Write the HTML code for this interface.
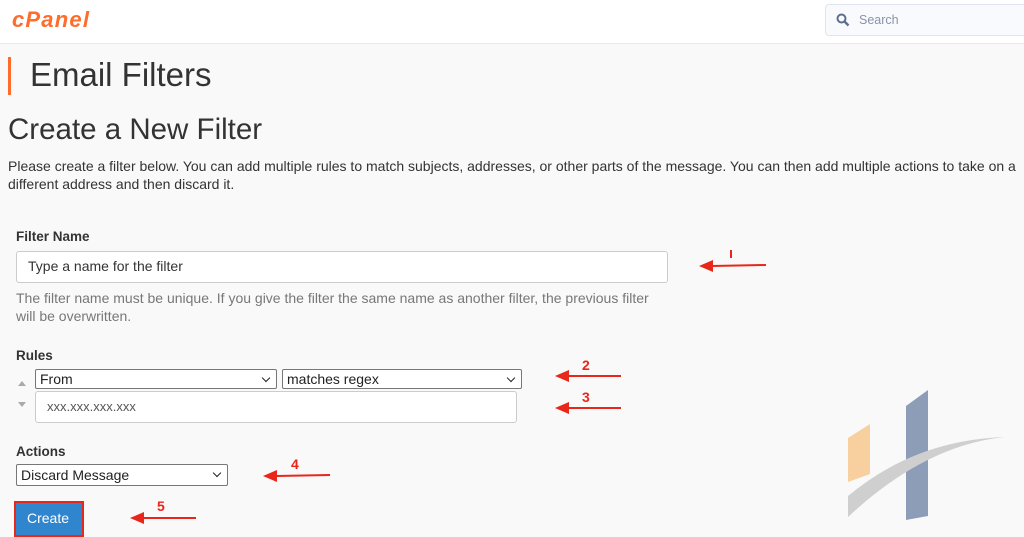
<!DOCTYPE html>
<html><head><meta charset="utf-8"><style>
*{box-sizing:border-box;margin:0;padding:0}
body{width:1024px;height:537px;overflow:hidden;background:#f9f9f9;font-family:"Liberation Sans",sans-serif;color:#333;position:relative}
.a{position:absolute}
.hdr{left:0;top:0;width:1024px;height:44px;background:#fff;border-bottom:1px solid #e6e9ef}
.sel{background:#fff;border:1px solid #777;border-radius:2px;font-size:14px;padding:1px 4px;color:#222}
.sel:after{content:"";position:absolute;right:7px;top:5px;width:5px;height:5px;border-right:1.5px solid #222;border-bottom:1.5px solid #222;transform:rotate(45deg)}
.inp{background:#fff;border:1px solid #ccc;border-radius:3px}
.lbl{font-weight:bold;font-size:13.5px;color:#333}
.num{color:#e8261a;font-weight:bold;font-size:14px}
</style></head><body>
<div class="a hdr"></div>
<div class="a" style="left:12px;top:7px;font-size:22px;font-weight:bold;font-style:italic;color:#ff6c2c;letter-spacing:1.2px">cPanel</div>
<div class="a" style="left:825px;top:4px;width:210px;height:32px;border:1px solid #dfe4ee;border-radius:4px;background:#f8fafd"></div>
<svg class="a" style="left:836px;top:13px" width="14" height="14" viewBox="0 0 14 14"><circle cx="5.5" cy="5.5" r="4" fill="none" stroke="#5b6f8f" stroke-width="2"/><path d="M8.5 8.5L12.5 12.5" stroke="#5b6f8f" stroke-width="2.4"/></svg>
<div class="a" style="left:859px;top:13px;font-size:12.5px;color:#8a94a6">Search</div>
<div class="a" style="left:8px;top:57px;width:3px;height:38px;background:#ff6c2c"></div>
<div class="a" style="left:30px;top:56px;font-size:33px;color:#333">Email Filters</div>
<div class="a" style="left:8px;top:113px;font-size:29.5px;color:#333">Create a New Filter</div>
<div class="a" style="left:8px;top:157px;font-size:14px;line-height:18px;white-space:nowrap;color:#333">Please create a filter below. You can add multiple rules to match subjects, addresses, or other parts of the message. You can then add multiple actions to take on a<br>different address and then discard it.</div>
<div class="a lbl" style="left:16px;top:229px">Filter Name</div>
<div class="a inp" style="left:16px;top:251px;width:652px;height:32px"></div>
<div class="a" style="left:28px;top:258px;font-size:14px;color:#333">Type a name for the filter</div>
<div class="a" style="left:16px;top:289px;font-size:14px;line-height:18px;color:#777;white-space:nowrap">The filter name must be unique. If you give the filter the same name as another filter, the previous filter<br>will be overwritten.</div>
<div class="a lbl" style="left:16px;top:348px">Rules</div>
<div class="a" style="left:18px;top:381px;width:0;height:0;border-left:4px solid transparent;border-right:4px solid transparent;border-bottom:5px solid #aaa"></div>
<div class="a" style="left:18px;top:402px;width:0;height:0;border-left:4px solid transparent;border-right:4px solid transparent;border-top:5px solid #aaa"></div>
<div class="a sel" style="left:35px;top:369px;width:242px;height:20px">From</div>
<div class="a sel" style="left:282px;top:369px;width:240px;height:20px">matches regex</div>
<div class="a inp" style="left:35px;top:391px;width:482px;height:32px"></div>
<div class="a" style="left:47px;top:399px;font-size:13px;color:#555">xxx.xxx.xxx.xxx</div>
<div class="a lbl" style="left:16px;top:444px">Actions</div>
<div class="a sel" style="left:16px;top:464px;width:212px;height:22px;padding-top:2px">Discard Message</div>
<div class="a" style="left:14px;top:501px;width:70px;height:36px;border:2px solid #e8261a;background:#2f86cf"></div>
<div class="a" style="left:27px;top:510px;font-size:14px;color:#fff">Create</div>
<svg class="a" style="left:0;top:0" width="1024" height="537">
<g stroke="#e8261a" stroke-width="2" fill="#e8261a">
<line x1="712" y1="266" x2="766" y2="265"/><path d="M699 266L713 260L713 272Z" stroke="none"/>
<line x1="568" y1="376" x2="621" y2="376"/><path d="M555 376L569 370L569 382Z" stroke="none"/>
<line x1="568" y1="408" x2="621" y2="408"/><path d="M555 408L569 402L569 414Z" stroke="none"/>
<line x1="276" y1="476" x2="330" y2="475"/><path d="M263 476L277 470L277 482Z" stroke="none"/>
<line x1="143" y1="518" x2="196" y2="518"/><path d="M130 518L144 512L144 524Z" stroke="none"/>
</g>
<path d="M731 250V258" stroke="#e8261a" stroke-width="2"/>
<path d="M848 438L870 424V474L848 482Z" fill="#f8cf9f"/>
<path d="M906 406L928 390V516L906 520Z" fill="#8d9db8"/>
<path d="M848 496Q915 440 1005 437Q925 445 848 517Z" fill="#cfcfcf"/>
</svg>
<div class="a num" style="left:582px;top:357px">2</div>
<div class="a num" style="left:582px;top:389px">3</div>
<div class="a num" style="left:291px;top:456px">4</div>
<div class="a num" style="left:157px;top:498px">5</div>
</body></html>
